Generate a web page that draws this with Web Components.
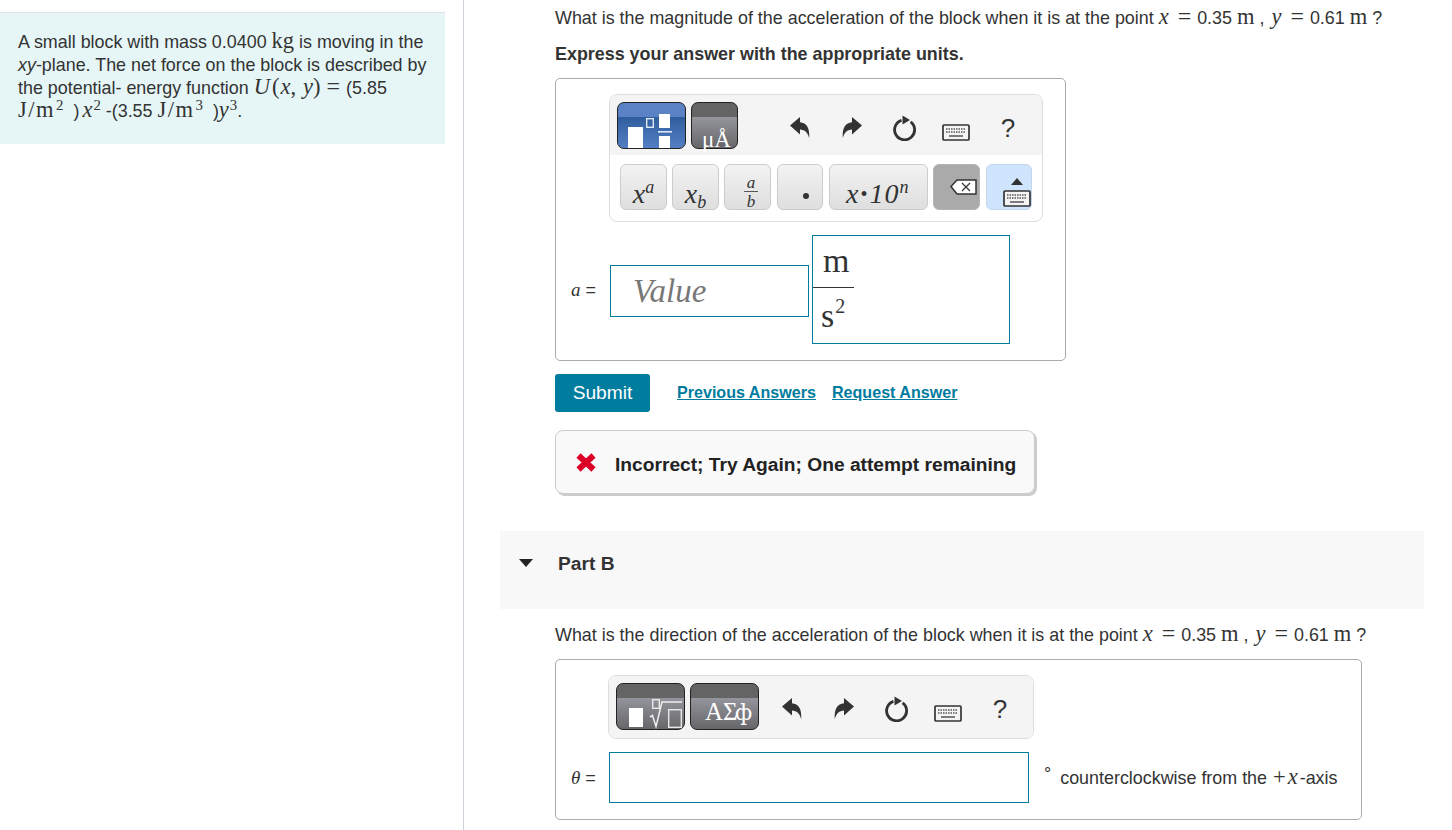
<!DOCTYPE html>
<html lang="en"><head><meta charset="utf-8"><title>Part A and Part B</title>
<style>html,body{margin:0;padding:0;height:830px;overflow:hidden;background:#fff}body{font:17.9px/24px "Liberation Sans",Arial,sans-serif;color:#333}</style>
</head><body><mp-app></mp-app>
<template id="app"><style>
:host{display:grid;grid-template-columns:464px 1fr;height:830px;overflow:hidden}
.left{border-right:1px solid #cdd3dc;padding-top:12px}
.right{padding:6px 28px 0 36px;min-width:0}
.in{padding-left:55px}
p{margin:0;white-space:nowrap}
.b{font-weight:bold}
.mt12{margin-top:12px}.mt13{margin-top:13px}.mt14{margin-top:14px}
mp-intro sup,p sup{font-size:.66em;line-height:0;vertical-align:.5em;margin-left:1px}
.jm{letter-spacing:1.5px;margin-right:5px}
.jm sup{letter-spacing:0}
mp-m.eq{margin:0 1px;font-size:24px}
p mp-m.eq{margin:0 1px 0 4px}
p mp-m.yy{margin-left:2px}
.row{display:flex;align-items:center;margin-top:13px}
.lbl{width:54px;padding-left:15px;box-sizing:border-box;font-size:18px;flex:none;white-space:nowrap}
.lbl i{font-family:"Liberation Serif",serif;font-size:19px}
.val{font:italic 33px/50px "Liberation Serif",serif;color:#777;padding-left:22px}
.frac{display:flex;flex-direction:column;width:41px;font:34px/1 "Liberation Serif",serif;color:#333}
.frac span{display:block}
.num{height:52px;border-bottom:1px solid #333;padding:7px 0 0 10px;box-sizing:border-box;line-height:36px}
.den{padding:10px 0 0 8px;line-height:36px}
.den sup{font-size:20px;line-height:0;vertical-align:14px;margin-left:1px}
.acts{display:flex;align-items:center;margin-top:13px}
.sub{width:95px;height:38px;background:#007c9f;border-radius:3px;color:#fff;font-size:19.2px;line-height:38px;text-align:center}
a{color:#007c9f;font-weight:bold;text-decoration:underline;font-size:16.1px;margin-top:-2px}
.l1{margin-left:27px}.l2{margin-left:16px}
.deg{margin-left:15px;font-size:18px;line-height:18px;align-self:flex-start;margin-top:13px}
.ccw{margin-left:9px;white-space:nowrap}
.x sup{font-size:18px;line-height:0;vertical-align:10px}
.x sub{font-size:18px;line-height:0;vertical-align:-5px}
</style>
<div class="left"><mp-intro>A small block with mass 0.0400 <mp-m>kg</mp-m> is moving in the<br><i>xy</i>-plane. The net force on the block is described by<br>the potential- energy function <mp-m i style="margin-right:2px">U</mp-m><mp-m style="margin-right:1px">(</mp-m><mp-m i>x</mp-m><mp-m style="margin-right:2px">,</mp-m> <mp-m i>y</mp-m><mp-m>)</mp-m> <mp-m class="eq">=</mp-m> (5.85<br><mp-m class="jm">J/m<sup>2</sup></mp-m> )<mp-m i style="margin-left:3px">x</mp-m><mp-m><sup>2</sup></mp-m> -(3.55 <mp-m class="jm">J/m<sup>3</sup></mp-m> )<mp-m i>y</mp-m><mp-m><sup>3</sup></mp-m>.</mp-intro></div>
<div class="right">
<div class="in">
<p>What is the magnitude of the acceleration of the block when it is at the point <mp-m i>x</mp-m> <mp-m class="eq">=</mp-m> 0.35 <mp-m>m</mp-m> , <mp-m i class="yy">y</mp-m> <mp-m class="eq">=</mp-m> 0.61 <mp-m>m</mp-m> ?</p>
<p class="b mt12">Express your answer with the appropriate units.</p>
<mp-box class="mt12" style="width:511px">
<mp-toolbar style="margin-left:53px;width:434px" start="36">
<mp-tab slot="tabs" kind="templates" tone="blue"></mp-tab>
<mp-tab slot="tabs" kind="units" tone="gray"></mp-tab>
<mp-key slot="keys" w="47"><span class="x">x<sup>a</sup></span></mp-key>
<mp-key slot="keys" w="47" g="5"><span class="x">x<sub>b</sub></span></mp-key>
<mp-key slot="keys" w="47" g="5" kind="frac"></mp-key>
<mp-key slot="keys" w="46" g="6" kind="dot"></mp-key>
<mp-key slot="keys" w="99" g="6" kind="sci"></mp-key>
<mp-key slot="keys" w="47" g="5" tone="dark" kind="back"></mp-key>
<mp-key slot="keys" w="46" g="6" tone="blue" kind="kbd"></mp-key>
</mp-toolbar>
<div class="row">
<span class="lbl" style="margin-top:1px"><i>a</i> =</span>
<mp-field style="width:199px;height:52px;margin-top:3px"><div class="val">Value</div></mp-field>
<mp-field style="width:198px;height:109px;margin-left:3px"><div class="frac"><span class="num">m</span><span class="den">s<sup>2</sup></span></div></mp-field>
</div>
</mp-box>
<div class="acts"><div class="sub">Submit</div><a class="l1">Previous Answers</a><a class="l2">Request Answer</a></div>
<mp-feedback>Incorrect; Try Again; One attempt remaining</mp-feedback>
</div>
<mp-partbar>Part B</mp-partbar>
<div class="in">
<p class="mt14">What is the direction of the acceleration of the block when it is at the point <mp-m i>x</mp-m> <mp-m class="eq">=</mp-m> 0.35 <mp-m>m</mp-m> , <mp-m i class="yy">y</mp-m> <mp-m class="eq">=</mp-m> 0.61 <mp-m>m</mp-m> ?</p>
<mp-box class="mt12" style="width:807px">
<mp-toolbar style="margin-left:52px;width:426px" start="7">
<mp-tab slot="tabs" kind="root" tone="gray"></mp-tab>
<mp-tab slot="tabs" kind="greek" tone="gray"></mp-tab>
</mp-toolbar>
<div class="row">
<span class="lbl" style="width:53px"><i>θ</i> =</span>
<mp-field style="width:420px;height:51px"></mp-field>
<span class="deg">°</span><span class="ccw">counterclockwise from the <mp-m style="margin:0 2px 0 1px">+</mp-m><mp-m i style="margin-right:2px">x</mp-m>-axis</span>
</div>
</mp-box>
</div>
</div></template>
<script>
const tpl=(css,html)=>{const t=document.createElement('template');t.innerHTML='<style>'+css+'</style>'+html;return t};
class Base extends HTMLElement{
  constructor(){super();this.attachShadow({mode:'open'})}
  use(t){this.shadowRoot.appendChild(t.content.cloneNode(true))}
}
const arrow='M0 8.5 10 0v5.2c6.5.4 10 5.6 9.2 16-1.4-5.6-4.4-8.4-9.2-8.6V17.5Z';
const I={
undo:'<svg width="20" height="22" viewBox="0 0 20 22"><path fill="#333" d="'+arrow+'"/></svg>',
redo:'<svg width="20" height="22" viewBox="0 0 20 22"><path fill="#333" transform="matrix(-1 0 0 1 20 0)" d="'+arrow+'"/></svg>',
refresh:'<svg width="24" height="26" viewBox="0 0 24 26"><path fill="none" stroke="#333" stroke-width="2.8" d="M9.5 5.3A10 10 0 1 0 18.6 6.8"/><path fill="#333" d="M10.5 0.5 18 5 10.5 9.5Z"/></svg>',
kbd:'<svg width="28" height="17" viewBox="0 0 28 17"><rect x="1" y="1" width="26" height="15" rx="1" fill="#f4f4f4" stroke="#333" stroke-width="1.7"/><path stroke="#555" stroke-width="1.5" stroke-dasharray="1.5 1" d="M4 5H24M4 8H24"/><path stroke="#555" stroke-width="1.5" d="M7 12H21"/></svg>',
back:'<svg width="27" height="16" viewBox="0 0 27 16"><path fill="#fff" stroke="#333" stroke-width="1.5" d="M26 1H7L1 7.5 7 15H26Z"/><path stroke="#333" stroke-width="1.2" d="M12 4 20 12M20 4 12 12"/></svg>'
};
const appT=document.getElementById('app');
customElements.define('mp-app',class extends Base{constructor(){super();this.use(appT)}});
const introT=tpl(':host{display:block;width:445px;height:132px;box-sizing:border-box;border-top:1px solid #dde1e4;background:#e6f6f7;padding:18px 0 0 18px;line-height:23px;white-space:nowrap}','<slot></slot>');
customElements.define('mp-intro',class extends Base{constructor(){super();this.use(introT)}});
const mT=tpl(':host{display:inline;font-family:"Liberation Serif",serif;font-size:22.5px;line-height:0}:host([i]){font-style:italic}','<slot></slot>');
customElements.define('mp-m',class extends Base{constructor(){super();this.use(mT)}});
const boxT=tpl(':host{display:block;box-sizing:border-box;border:1px solid #aaa;border-radius:5px;padding:15px 0 16px}','<slot></slot>');
customElements.define('mp-box',class extends Base{constructor(){super();this.use(boxT)}});
const fieldT=tpl(':host{display:block;flex:none;box-sizing:border-box;border:1px solid #007c9f;background:#fff}','<slot></slot>');
customElements.define('mp-field',class extends Base{constructor(){super();this.use(fieldT)}});
const tbT=tpl(`:host{display:block;box-sizing:border-box;border:1px solid #ddd;border-radius:8px;overflow:hidden}
.top{display:flex;align-items:flex-start;background:#f4f4f4;padding:7px 0 6px 7px;height:60px;box-sizing:border-box}
.tabs{display:flex;gap:5px}
.icons{display:flex;margin-top:3px}
.ic{display:flex;align-items:center;justify-content:center;width:52px;height:46px;flex:none}
.ic.k svg{margin-top:8px}
.q{font-size:26px;line-height:46px;color:#333}
.keys{display:flex;padding:9px 0 11px 10px}
.keys.none{display:none}`,
`<div class="top"><div class="tabs"><slot name="tabs"></slot></div><div class="icons"></div></div><div class="keys"><slot name="keys"></slot></div>`);
customElements.define('mp-toolbar',class extends Base{constructor(){super();this.use(tbT)}
 connectedCallback(){const r=this.shadowRoot,ic=r.querySelector('.icons');ic.style.marginLeft=this.getAttribute('start')+'px';
  if(!ic.children.length){ic.innerHTML=['undo','redo','refresh','kbd'].map(n=>'<div class="ic'+(n==='kbd'?' k':'')+'">'+I[n]+'</div>').join('')+'<div class="ic q">?</div>'}
  if(!this.querySelector('[slot=keys]')){r.querySelector('.keys').classList.add('none');r.querySelector('.top').style.height='62px'}
 }});
const tabT=tpl(`:host{display:block;width:69px;height:47px;box-sizing:border-box;border:1px solid #222;border-radius:7px;flex:none;
 background:linear-gradient(var(--c0),var(--c0)) top/100% 14px no-repeat,linear-gradient(var(--c1),var(--c2)) bottom/100% 32px no-repeat}
:host([tone=gray]){--c0:#646464;--c1:#96969e;--c2:#66666a}
:host([tone=blue]){--c0:#5a82c4;--c1:#2f5c9c;--c2:#5380c4}
:host([kind=units]){width:47px}
svg{display:block;overflow:visible}`,'');
const art={
 templates:'<rect x="10" y="24" width="15" height="21" fill="#fff"/><rect x="28.7" y="15.7" width="6.6" height="8.6" fill="none" stroke="#dfe7f5" stroke-width="1.4"/><rect x="41" y="11" width="11" height="14" fill="#fff"/><rect x="40" y="28" width="14" height="1.6" fill="#dfe7f5"/><rect x="41" y="33" width="11" height="12" fill="#fff"/>',
 units:'<text x="10" y="44" font-family="Liberation Serif,serif" font-size="23" fill="#fff">μÅ</text>',
 root:'<rect x="12" y="24" width="14" height="19" fill="#fff"/><rect x="35.7" y="15.7" width="6.6" height="8.6" fill="none" stroke="#e8e8e8" stroke-width="1.4"/><path fill="none" stroke="#eee" stroke-width="1.5" d="M33 33l2.5-1.5 3.5 11L45 18H65"/><rect x="51.7" y="25.7" width="12.6" height="17.6" fill="none" stroke="#e8e8e8" stroke-width="1.4"/>',
 greek:'<text x="14" y="36" font-family="Liberation Serif,serif" font-size="25" fill="#fff">ΑΣ</text><text x="44" y="36" font-family="DejaVu Serif,serif" font-size="22" fill="#fff">ф</text>'
};
customElements.define('mp-tab',class extends Base{constructor(){super();this.use(tabT)}
 connectedCallback(){if(this.shadowRoot.querySelector('svg'))return;const k=this.getAttribute('kind'),w=k==='units'?45:67;
 this.shadowRoot.innerHTML+=`<svg width="${w}" height="45" viewBox="0 0 ${w} 45">${art[k]}</svg>`}});
const keyT=tpl(`:host{display:flex;flex:none;box-sizing:border-box;height:46px;border:1px solid #ccc;border-radius:6px;background:linear-gradient(#f3f3f3,#dedede);position:relative;justify-content:center;font:italic 28px/1 "Liberation Serif",serif;color:#333}
:host([tone=dark]){background:#aaa;border-color:#b5b5b5}:host([tone=blue]){background:#cfe4fd;border-color:#c4d6ea}
.w{position:absolute;left:0;right:0;top:15px;text-align:center}
.f{position:absolute;left:19px;width:14px;top:10px;font-size:17px;line-height:15px;text-align:center}.f b{display:block;border-top:1px solid #555;font-weight:normal;margin-top:1px;padding-top:2px}
.d{position:absolute;left:25px;top:28px;width:6px;height:6px;border-radius:50%;background:#333}
.s{position:absolute;left:16px;top:15px;white-space:nowrap;letter-spacing:1px}.s sup{font-size:18px;line-height:0;vertical-align:10px}
.s em{font-style:normal;font-size:20px;vertical-align:2px;margin:0 1px;line-height:0}
.bk{position:absolute;left:16px;top:14px;line-height:0}
.t{position:absolute;left:24px;top:13px;border:6px solid transparent;border-top:0;border-bottom:7px solid #333}
.kb{position:absolute;left:16px;top:25px;line-height:0}`,'<div class="w"><slot></slot></div>');
customElements.define('mp-key',class extends Base{constructor(){super();this.use(keyT)}
 connectedCallback(){const g=this.getAttribute('g');this.style.width=this.getAttribute('w')+'px';if(g)this.style.marginLeft=g+'px';
 const k=this.getAttribute('kind'),r=this.shadowRoot;if(r.querySelector('.z'))return;let h='';
 if(k==='frac')h='<div class="f z">a<b>b</b></div>';
 if(k==='dot')h='<div class="d z"></div>';
 if(k==='sci')h='<div class="s z">x<em>•</em>10<sup>n</sup></div>';
 if(k==='back')h='<div class="bk z">'+I.back+'</div>';
 if(k==='kbd')h='<div class="t z"></div><div class="kb z">'+I.kbd+'</div>';
 if(h){r.querySelector('.w').remove();r.innerHTML+=h}
 }});
const fbT=tpl(`:host{display:flex;align-items:center;width:480px;height:64px;box-sizing:border-box;margin-top:18px;border:1px solid #ccc;border-radius:8px;background:#f9f9f9;box-shadow:2px 2px 0 #ccc;padding-left:20px;font-weight:bold;font-size:19.2px;white-space:nowrap;color:#222}
svg{margin-right:19px;flex:none}
span{margin-top:5px}`,'<svg width="20" height="19" viewBox="0 0 20 19"><path fill="none" stroke="#dc0028" stroke-width="6" stroke-linejoin="round" d="M2.5 2.5 17.5 16.5M17.5 2.5 2.5 16.5"/></svg><span><slot></slot></span>');
customElements.define('mp-feedback',class extends Base{constructor(){super();this.use(fbT)}});
const pbT=tpl(`:host{display:flex;align-items:flex-start;height:78px;box-sizing:border-box;margin-top:37px;background:#f8f8f8;padding:21px 0 0 19px;font-weight:bold;font-size:19.2px}
.t{width:0;height:0;border:7.5px solid transparent;border-bottom:0;border-top:8px solid #222;margin:7px 25px 0 0}`,'<div class="t"></div><slot></slot>');
customElements.define('mp-partbar',class extends Base{constructor(){super();this.use(pbT)}});
</script></body></html>
